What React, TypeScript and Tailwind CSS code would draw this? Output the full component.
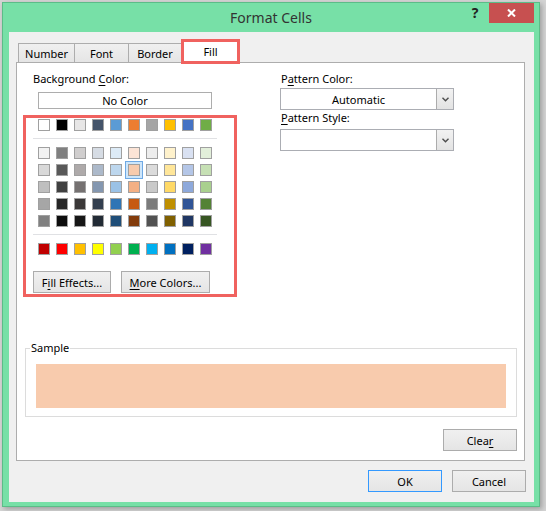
import React from 'react';

const row1 = ['bg-[#FFFFFF]','bg-[#000000]','bg-[#E7E6E6]','bg-[#44546A]','bg-[#5B9BD5]','bg-[#ED7D31]','bg-[#A5A5A5]','bg-[#FFC000]','bg-[#4472C4]','bg-[#70AD47]'];
const tints = [
  ['bg-[#F2F2F2]','bg-[#808080]','bg-[#D0CECE]','bg-[#D6DCE4]','bg-[#DDEBF7]','bg-[#FCE4D6]','bg-[#EDEDED]','bg-[#FFF2CC]','bg-[#D9E1F2]','bg-[#E2EFDA]'],
  ['bg-[#D9D9D9]','bg-[#595959]','bg-[#AEAAAA]','bg-[#ACB9CA]','bg-[#BDD7EE]','bg-[#F8CBAD]','bg-[#DBDBDB]','bg-[#FFE699]','bg-[#B4C6E7]','bg-[#C6E0B4]'],
  ['bg-[#BFBFBF]','bg-[#404040]','bg-[#757171]','bg-[#8497B0]','bg-[#9BC2E6]','bg-[#F4B084]','bg-[#C9C9C9]','bg-[#FFD966]','bg-[#8EA9DB]','bg-[#A9D08E]'],
  ['bg-[#A6A6A6]','bg-[#262626]','bg-[#3A3838]','bg-[#333F4F]','bg-[#2F75B5]','bg-[#C65911]','bg-[#7B7B7B]','bg-[#BF8F00]','bg-[#305496]','bg-[#548235]'],
  ['bg-[#808080]','bg-[#0D0D0D]','bg-[#161616]','bg-[#222B35]','bg-[#1F4E78]','bg-[#833C0C]','bg-[#525252]','bg-[#806000]','bg-[#203764]','bg-[#375623]'],
];
const standard = ['bg-[#C00000]','bg-[#FF0000]','bg-[#FFC000]','bg-[#FFFF00]','bg-[#92D050]','bg-[#00B050]','bg-[#00B0F0]','bg-[#0070C0]','bg-[#002060]','bg-[#7030A0]'];

function Swatch({ c, sel }: { c: string; sel?: boolean }) {
  return (
    <div
      className={`w-[12px] h-[12px] border border-[#a0a0a0] ${c} ${
        sel ? 'shadow-[0_0_0_2px_#cde6fb,0_0_0_3px_#6fa9e4]' : ''
      }`}
    />
  );
}

function SwatchRow({ colors, selIndex }: { colors: string[]; selIndex?: number }) {
  return (
    <div className="flex gap-[6px]">
      {colors.map((c, i) => (
        <Swatch key={i} c={c} sel={i === selIndex} />
      ))}
    </div>
  );
}

function Btn({ children, className = '' }: { children: React.ReactNode; className?: string }) {
  return (
    <div
      className={`h-[22px] border bg-linear-to-b from-[#f0f0f0] to-[#e5e5e5] flex items-center justify-center text-black ${className}`}
    >
      {children}
    </div>
  );
}

function U({ children }: { children: React.ReactNode }) {
  return <span className="underline decoration-1 underline-offset-[2px]">{children}</span>;
}

function Tab({ children, className = '' }: { children: React.ReactNode; className?: string }) {
  return (
    <div
      className={`h-[19px] border border-b-0 border-[#adadad] bg-linear-to-b from-[#f0f0f0] to-[#e5e5e5] flex items-center justify-center ${className}`}
    >
      {children}
    </div>
  );
}

function Dropdown({ value, className = '' }: { value?: string; className?: string }) {
  return (
    <div className={`w-[174px] h-[22px] border border-[#abadb3] bg-white flex ${className}`}>
      <div className="flex-1 flex items-center justify-center">{value}</div>
      <div className="w-[17px] border-l border-[#acacac] bg-linear-to-b from-[#f2f2f2] to-[#e3e3e3] flex items-center justify-center">
        <svg width="7" height="5" viewBox="0 0 7 5">
          <path d="M0.5 0.8 L3.5 3.8 L6.5 0.8" fill="none" stroke="#4d4d4d" strokeWidth="1.4" />
        </svg>
      </div>
    </div>
  );
}

export default function App() {
  return (
    <div className="w-[546px] h-[511px] overflow-hidden bg-[#d4d4d4] pt-[2px] pl-[2px] font-['Noto_Sans',sans-serif] text-[11px] leading-[15px] text-black">
      <div className="w-[538px] h-[505px] border border-[#5bbd88] bg-[#77e0a7] flex flex-col shadow-[2px_2px_5px_rgba(0,0,0,0.25)]">
        {/* Title bar */}
        <div className="grid h-[29px] shrink-0">
          <div className="col-start-1 row-start-1 text-center pt-[5px] text-[14px] leading-[20px] text-[#333]">
            Format Cells
          </div>
          <div className="col-start-1 row-start-1 justify-self-end flex items-start mr-[5px]">
            <div className="w-[16px] mt-[2px] mr-[6px] text-center text-[14px] leading-[16px] font-bold text-[#222]">?</div>
            <div className="w-[45px] h-[20px] bg-[#c75050] flex items-center justify-center">
              <svg width="9" height="8" viewBox="0 0 9 8">
                <path d="M1 0.5 L8 7.5 M8 0.5 L1 7.5" stroke="#ffffff" strokeWidth="2" fill="none" />
              </svg>
            </div>
          </div>
        </div>

        {/* Client area */}
        <div className="ml-[6px] w-[525px] h-[470px] bg-[#f0f0f0] flex flex-col pt-[7px]">
          {/* Tabs */}
          <div className="flex items-end h-[23px] pl-[9px] relative z-10">
            <Tab className="w-[57px]">Number</Tab>
            <Tab className="w-[55px] -ml-px">Font</Tab>
            <Tab className="w-[54px] -ml-px">Border</Tab>
            <div className="-ml-px w-[59px] h-[25px] -mb-[2px] border-[3px] border-[#f0625f] bg-white flex items-center justify-center">
              Fill
            </div>
          </div>

          {/* Panel */}
          <div className="ml-[7px] w-[509px] h-[399px] border border-[#adadad] bg-white flex flex-col">
            <div className="flex pt-[8px] pl-[6px]">
              {/* Left column */}
              <div className="w-[214px] flex flex-col">
                <div className="pl-[10px] h-[15px]">
                  Background <U>C</U>olor:
                </div>
                <div className="mt-[6px] ml-[15px] w-[174px] h-[17px] border border-[#adadad] bg-white flex items-center justify-center">
                  No Color
                </div>
                <div className="mt-[6px] h-[182px] border-[3px] border-[#f0625f] flex flex-col">
                  <div className="mt-[1px] ml-[12px]">
                    <SwatchRow colors={row1} />
                  </div>
                  <div className="mt-[7px] ml-[7px] w-[184px] h-px bg-[#e0e1e4]" />
                  <div className="mt-[8px] ml-[12px] flex flex-col gap-[5px]">
                    {tints.map((r, i) => (
                      <SwatchRow key={i} colors={r} selIndex={i === 1 ? 5 : undefined} />
                    ))}
                  </div>
                  <div className="mt-[7px] ml-[7px] w-[184px] h-px bg-[#e0e1e4]" />
                  <div className="mt-[8px] ml-[12px]">
                    <SwatchRow colors={standard} />
                  </div>
                  <div className="mt-[16px] ml-[7px] flex gap-[10px]">
                    <Btn className="w-[78px] border-[#acacac]">
                      F<U>i</U>ll Effects...
                    </Btn>
                    <Btn className="w-[89px] border-[#acacac]">
                      <U>M</U>ore Colors...
                    </Btn>
                  </div>
                </div>
              </div>

              {/* Right column */}
              <div className="ml-[43px] w-[174px] flex flex-col">
                <div className="pl-[1px] h-[15px]">
                  P<U>a</U>ttern Color:
                </div>
                <Dropdown className="mt-[2px]" value="Automatic" />
                <div className="pl-[1px] h-[15px]">
                  <U>P</U>attern Style:
                </div>
                <Dropdown className="mt-[4px]" />
              </div>
            </div>

            {/* Sample */}
            <div className="mt-[51px] ml-[8px] w-[492px] border border-[#dcdcdc] flex flex-col pb-[8px]">
              <div className="-mt-[8px] ml-[4px] self-start bg-white px-[1px] h-[14px] leading-[14px]">Sample</div>
              <div className="mt-[9px] ml-[10px] w-[470px] h-[44px] bg-[#f8cbad]" />
            </div>

            <div className="mt-[12px] mr-[7px] self-end">
              <Btn className="w-[74px] border-[#acacac]">
                Clea<U>r</U>
              </Btn>
            </div>
          </div>

          {/* Bottom buttons */}
          <div className="flex justify-end gap-[10px] mt-[9px] mr-[8px]">
            <Btn className="w-[74px] border-[#3399ff]">OK</Btn>
            <Btn className="w-[74px] border-[#acacac]">Cancel</Btn>
          </div>
        </div>
      </div>
    </div>
  );
}
